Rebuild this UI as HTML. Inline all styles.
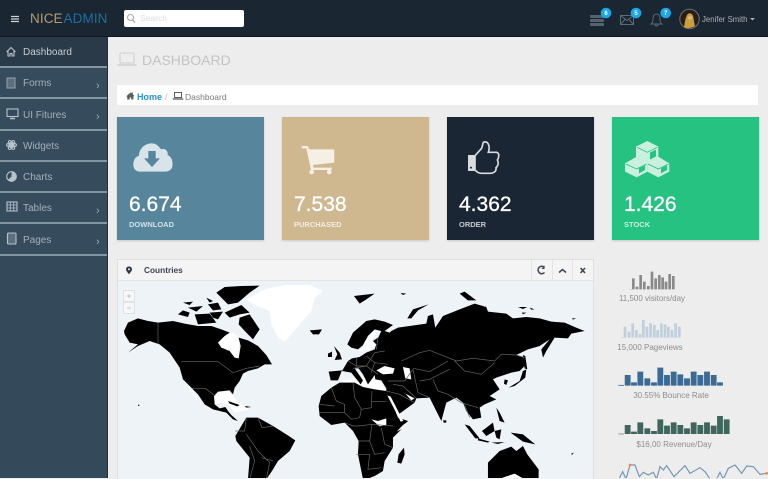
<!DOCTYPE html>
<html><head><meta charset="utf-8"><title>Nice Admin</title>
<style>
html,body{margin:0;padding:0}
body{width:768px;height:478px;overflow:hidden;background:#ededed;font-family:"Liberation Sans",sans-serif;position:relative}
.a{position:absolute;white-space:nowrap}
#top{left:0;top:0;width:768px;height:36px;background:#1a2632;border-bottom:1px solid #10171f}
#side{left:0;top:37px;width:108px;height:441px;background:#34495a}
.it{position:absolute;left:0;width:107px;height:29px;border-bottom:2px solid #8496a1;color:#a3b0b9;font-size:10px;line-height:32px;text-indent:23px;background:#364c5d}
.it b{position:absolute;left:96px;top:2px;font-weight:400;font-size:11px;text-indent:0;color:#98a7b1}
.card{position:absolute;top:117px;width:147px;height:123px;box-shadow:0 1px 2px #c8c8c8;color:#fff}
.card .n{position:absolute;left:12px;top:75px;font-size:21px;line-height:26px;-webkit-text-stroke:.3px currentColor}
.card .l{position:absolute;left:12px;top:103px;font-size:7.500px;line-height:10px;font-weight:700;opacity:.75}
.st{position:absolute;width:150px;text-align:center;font-size:8px;line-height:11px;color:#8d8d8d}
</style></head><body>

<div class="a" id="top"></div>
<div class="a" style="left:30px;top:11px;font-size:13.5px;line-height:15px;color:#b99b70;letter-spacing:.1px">NICE <span style="color:#1c6f9e;margin-left:-3px">ADMIN</span></div>
<div class="a" style="left:124px;top:10px;width:120px;height:17px;background:#fff;border-radius:2px"></div>
<div class="a" style="left:140px;top:13px;font-size:8.5px;line-height:11px;color:#d9dde0">Search</div>
<div class="a" style="left:702px;top:14px;font-size:7.8px;line-height:11px;color:#a9b0b6">Jenifer Smith</div>

<div class="a" id="side">
<div class="it" style="top:0;background:#2b3a48;color:#c5ced4">Dashboard</div>
<div class="it" style="top:31px">Forms<b>›</b></div>
<div class="it" style="top:62px;height:30px;line-height:33px">UI Fitures<b>›</b></div>
<div class="it" style="top:94px">Widgets</div>
<div class="it" style="top:125px">Charts</div>
<div class="it" style="top:156px">Tables<b>›</b></div>
<div class="it" style="top:187px;height:30px;line-height:33px">Pages<b>›</b></div>
</div>
<div class="a" style="left:107px;top:37px;width:1px;height:441px;background:#20303c"></div>

<div class="a" style="left:142px;top:51px;font-size:14px;line-height:19px;color:#c3c3c3">DASHBOARD</div>
<div class="a" style="left:117px;top:85px;width:641px;height:20px;background:#fff"></div>
<div class="a" style="left:137px;top:91px;font-size:9px;line-height:12px;color:#2a8fe0;font-weight:700">Home</div>
<div class="a" style="left:165px;top:91px;font-size:9px;line-height:12px;color:#bbb">/</div>
<div class="a" style="left:185px;top:91px;font-size:8.5px;line-height:12px;color:#777">Dashboard</div>

<div class="card" style="left:117px;background:#56859c"><div class="n">6.674</div><div class="l">DOWNLOAD</div></div>
<div class="card" style="left:282px;background:#cfb790"><div class="n">7.538</div><div class="l">PURCHASED</div></div>
<div class="card" style="left:447px;background:#1a2633"><div class="n">4.362</div><div class="l">ORDER</div></div>
<div class="card" style="left:612px;background:#26c281"><div class="n">1.426</div><div class="l">STOCK</div></div>

<div class="a" style="left:117px;top:259px;width:475px;height:219px;background:#eef3f8;border:1px solid #dfdfdf;border-bottom:0;overflow:hidden">
<div class="a" style="left:0;top:0;width:475px;height:20px;background:#f4f4f4;border-bottom:1px solid #e3e3e3"></div>
<div class="a" style="left:26px;top:5px;font-size:8.3px;line-height:11px;font-weight:700;color:#3d4650">Countries</div>
<div class="a" style="left:413px;top:0;width:20px;height:20px;border-left:1px solid #e3e3e3"></div>
<div class="a" style="left:434px;top:0;width:20px;height:20px;border-left:1px solid #e3e3e3"></div>
<div class="a" style="left:454px;top:0;width:20px;height:20px;border-left:1px solid #e3e3e3"></div>
</div>

<svg class="a" style="left:0;top:0" width="768" height="478" viewBox="0 0 768 478">
<defs><clipPath id="mc"><rect x="118" y="281" width="475" height="197"/></clipPath></defs>

<!-- top bar icons -->
<path d="M11 16.500h8M11 19h8M11 21.500h8" stroke="#cfd4d8" stroke-width="1.300" fill="none"/>
<circle cx="130.500" cy="17.500" r="3" fill="none" stroke="#aaa" stroke-width="1.100"/><path d="M132.500 20l2.500 2.500" stroke="#aaa" stroke-width="1.300"/>
<g fill="#55636f"><rect x="590" y="15" width="14" height="3" rx="1"/><rect x="590" y="19" width="14" height="3" rx="1"/><rect x="590" y="23" width="14" height="3" rx="1"/></g>
<g fill="none" stroke="#5d6a76" stroke-width="1"><rect x="620.500" y="15.500" width="13" height="9"/><path d="M620.500 15.500l6.500 5 6.500-5M620.500 24.500l4.500-5M633.500 24.500l-4.500-5"/>
<path d="M651 24c2-1.500 2-3 2-5.500 0-3 1.500-4.500 3.500-4.500s3.500 1.500 3.500 4.500c0 2.500 0 4 2 5.500zM655 24.500c0 2 3 2 3 0"/></g>
<g fill="#1ba7e8"><circle cx="606" cy="13" r="5.300"/><circle cx="636" cy="13" r="5.300"/><circle cx="665.700" cy="13" r="5.300"/></g>
<g fill="#fff" font-family="Liberation Sans" font-size="6" font-weight="700" text-anchor="middle"><text x="606" y="15">6</text><text x="636" y="15">5</text><text x="665.700" y="15">7</text></g>
<circle cx="689.500" cy="19" r="9.700" fill="#2a1d14" stroke="#66747d" stroke-width="1"/>
<path d="M684 27c1-5 1-8 3-12 2-3 5-2 6 1 1 4 1 7 2 10-3 2-8 3-11 1z" fill="#c9a03c"/><path d="M688 18c0-2.500 4-2.500 4 0 0 2-4 2-4 0z" fill="#dcb68c"/>
<path d="M750 18h5l-2.500 2.500z" fill="#a9b0b6"/>

<!-- sidebar icons -->
<g fill="none" stroke="#b7c2ca" stroke-width="1.100">
<path d="M6.500 52l4.500-4.500 4.500 4.500M8 51v5h2v-2.500h2v2.500h2v-5"/>
<rect x="7" y="78" width="8" height="10" fill="#5c6f7d" stroke="#8d9ca7"/>
<rect x="7" y="109" width="11" height="7.500" fill="#34495a"/><path d="M10 118.500h5" stroke-width="1.500"/>
<circle cx="11.500" cy="145" r="1.800" fill="#b7c2ca"/><ellipse cx="11.500" cy="145" rx="5" ry="2.200"/><ellipse cx="11.500" cy="145" rx="5" ry="2.200" transform="rotate(60 11.500 145)"/><ellipse cx="11.500" cy="145" rx="5" ry="2.200" transform="rotate(120 11.500 145)"/>
<circle cx="11.500" cy="176.500" r="4.800"/>
<rect x="7" y="202" width="10" height="9"/><path d="M7 205h10M7 208h10M10.300 202v9M13.700 202v9" stroke-width=".8"/>
<rect x="7.500" y="233" width="8.500" height="11" rx="1" fill="#5c6f7d"/>
</g>
<path d="M11.500 176.500v-4.800a4.800 4.800 0 1 1-3.500 8z" fill="#b7c2ca"/>

<!-- title + crumb icons -->
<g fill="none" stroke="#cfcfcf" stroke-width="1.100"><rect x="120" y="53" width="14" height="10" rx="1"/><path d="M117.500 65h19" stroke-width="1.500"/></g>
<path d="M126 96.500l4.500-4 1.200 1v-1h1.200v2l1.500 1.400-1 .6v3h-2.200v-2h-1.500v2h-2.500v-3z" fill="#5d5d5d"/>
<g fill="none" stroke="#5d5d5d" stroke-width="1"><rect x="174.500" y="92.500" width="7" height="5"/><path d="M172.800 99h10.500" stroke-width="1.300"/></g>

<!-- card icons -->
<g transform="translate(115 115) scale(.3333)">
<path d="M55 150C55 132 63 125 72 122 72 100 90 85 110 85 125 85 132 95 138 103 150 98 160 108 158 120 170 125 175 140 172 155 170 165 160 170 150 170H75C62 170 55 160 55 150Z" fill="#d8e4ea"/>
<path d="M100 108H122V130H135L111 156 87 130H100Z" fill="#56859c"/>
<g fill="#f5efe5"><path d="M560 93H578L583 103H658V143L594 150 596 158H650V165H588L574 100H560Z"/><circle cx="590" cy="171" r="7"/><circle cx="643" cy="171" r="7"/></g>
</g>
<g transform="translate(440 115) scale(.3333)">
<path d="M105 122L125 100 130 82C145 76 151 95 145 112H170C180 115 176 130 172 135 178 145 172 155 168 158 170 170 160 175 150 175H125C115 175 110 170 105 165Z" fill="none" stroke="#d8dcdf" stroke-width="5"/>
<rect x="84" y="120" width="21" height="48" rx="2" fill="#d8dcdf"/><circle cx="93" cy="158" r="3" fill="#1a2633"/>
<g fill="#c9f0de">
<path d="M588 95L622 78 655 95V130L622 148 588 130Z"/>
<path d="M555 145L590 125 622 145V170L590 187 555 170Z"/>
<path d="M622 145L655 125 688 145V170L655 187 622 170Z"/></g>
<g fill="#26c281"><path d="M630 113L648 104V124L630 134Z"/><path d="M597 160L615 151V165L597 175Z"/><path d="M663 160L681 151V165L663 175Z"/></g>
<g fill="none" stroke="#26c281" stroke-width="2.500"><path d="M592 97L622 112 652 97M558 147L590 162 620 147M624 147L655 162 686 147"/></g>
</g>

<!-- panel icons -->
<path d="M129 266.500c-2 0-3 1.300-3 2.800 0 1.700 2 3.700 3 5 1-1.300 3-3.300 3-5 0-1.500-1-2.800-3-2.800z" fill="#2d3a44"/><circle cx="129" cy="269.200" r="1" fill="#f4f4f4"/>
<g fill="none" stroke="#3d4650" stroke-width="1.500"><path d="M544.500 267.500a3.700 3.700 0 1 0 0 5"/><path d="M559 272.500l3.500-3 3.500 3"/><path d="M580.500 268l4.500 5M585 268l-4.500 5"/></g>
<path d="M544.500 265.500v3.500h-3z" fill="#3d4650"/>

<!-- MAP -->
<g clip-path="url(#mc)"><g transform="translate(118 281) scale(.3333)">
<!-- Greenland + seas behind land -->
<g fill="#fff">
<path d="M385 55L440 25 500 12 575 12 615 30 590 50 580 90 550 125 500 182 480 170 460 130 455 90 410 72Z"/>
<path d="M300 185L320 165 345 155 362 170 365 232 350 232 335 210 310 200Z"/>
<path d="M285 340L330 328 345 345 360 365 395 385 350 395 335 375 315 365 290 370Z"/>
<path d="M665 300L770 285 805 322 805 332 770 325 735 318 710 305Z"/>
</g>
<g fill="#000">
<!-- North America -->
<path d="M18 150L30 125 60 112 90 120 120 125 165 120 200 128 240 135 280 135 310 145 335 155 320 165 300 185 310 200 335 210 350 230 362 232 368 195 362 170 390 178 420 195 445 222 462 250 440 250 420 262 390 270 375 278 365 300 350 320 345 340 335 328 300 332 288 345 290 370 305 382 322 378 330 390 340 402 360 420 345 415 325 395 285 385 260 370 240 340 222 322 195 295 185 260 155 215 125 190 95 180 60 195 30 215 60 190 35 185 20 160Z"/>
<path d="M295 35L320 18 370 15 425 14 395 35 360 65 330 70 310 50Z"/>
<path d="M365 110L395 100 425 145 405 175 385 155 362 130Z"/>
<path d="M180 100L195 88 215 95 210 108ZM195 65L225 62 215 72ZM210 80L255 75 235 92ZM230 100L275 98 295 125 240 130ZM265 50L285 60 275 65ZM270 70L300 65 310 85 285 88ZM275 95L315 92 300 115 285 110ZM320 95L370 72 395 95 365 100 335 110Z"/>
<path d="M330 360L365 372 358 376 335 368ZM380 375L400 378 385 380Z"/><circle cx="62" cy="373" r="2"/>
<!-- South America -->
<path d="M352 465L385 410 420 410 465 435 505 460 532 478 515 510 480 540 462 570 445 595H390L395 530 355 480Z"/>
<!-- N Atlantic islands -->
<path d="M575 148L612 145 603 160 585 160Z"/>
<path d="M708 45L770 38 745 55 725 68ZM848 36L865 38 855 42ZM868 112L885 85 932 70 900 88 880 112ZM1025 38L1040 32 1075 58 1050 58ZM1200 78L1228 78 1215 84ZM1235 80L1250 85 1240 86ZM1212 95L1225 95 1215 100ZM1362 112L1375 112 1365 116Z"/>
<path d="M648 195L665 215 672 235 650 237 658 220ZM630 218L642 212 642 228 630 228Z"/>
<path d="M632 272L672 268 660 298 638 298Z"/>
<!-- Scandinavia -->
<path d="M688 190L705 155 745 120 770 115 800 122 825 132 800 150 815 155 805 170 780 172 790 150 770 145 750 165 738 190 720 205 700 200Z"/>
<!-- Eurasia -->
<path d="M672 270L690 240 702 232 725 228 745 215 770 205 775 190 765 180 780 170 805 165 820 150 840 140 925 128 930 105 945 100 952 140 975 105 1025 85 1070 68 1105 78 1110 92 1165 98 1185 112 1225 108 1265 112 1300 122 1340 125 1380 142 1400 150 1360 158 1350 172 1310 170 1285 210 1275 230 1270 205 1295 175 1265 195 1230 205 1195 222 1215 228 1225 250 1205 270 1180 275 1135 290 1125 295 1145 325 1115 345 1135 355 1100 370 1085 380 1090 410 1065 415 1045 390 1035 365 1015 350 985 365 970 420 945 370 935 350 895 352 890 365 845 398 825 392 805 345 805 322 790 298 772 295 770 282 765 290 750 310 735 280 722 262 710 262 735 298 728 310 700 275Z"/>
<!-- Africa -->
<path d="M602 375L610 345 640 320 665 305 710 305 735 318 770 325 805 330 820 360 840 410 870 420 850 445 825 470 825 500 800 540 795 570 770 585 745 595H735L720 520 722 480 705 450 680 425 640 432 605 405Z"/>
<path d="M838 545L842 520 858 500 860 520 850 548Z"/>
<path d="M975 418L985 418 985 425 977 425Z"/>
<!-- Japan etc -->
<path d="M1172 320L1205 300 1215 270 1225 265 1222 290 1190 315ZM1215 222L1222 225 1228 265 1220 262ZM1160 295L1170 298 1165 312 1158 308Z"/>
<!-- Indonesia -->
<path d="M1092 450L1125 425 1130 450 1105 465ZM1040 430L1055 435 1085 472 1072 472ZM1080 472L1115 482 1110 485 1080 478ZM1130 450L1150 445 1145 475 1135 470ZM1178 455L1215 460 1252 490 1215 482ZM1135 380L1145 395 1160 425 1145 420ZM1120 485L1160 483 1140 489ZM1360 518L1368 515 1362 522Z"/>
<!-- Australia -->
<path d="M1110 545L1145 510 1180 497 1195 510 1215 495 1228 520 1262 565 1262 595H1110Z"/>
</g>
<!-- seas over land -->
<g fill="#fff">
<path d="M775 268L800 255 830 262 825 278 795 280Z"/>
<path d="M855 258L875 262 880 295 862 292Z"/>
<path d="M862 338L890 352 880 358Z"/>
<path d="M735 192L750 165 770 148 778 152 760 175 772 192 750 208 722 214Z"/>
<path d="M760 415L780 420 805 412 805 432 785 436Z"/>
<path d="M215 315L240 358 236 358 213 318Z"/>
<path d="M1140 595L1190 578 1220 595Z"/>
<path d="M808 343L818 347 856 420 848 422Z"/>
<path d="M872 420L860 440 836 452 855 432Z"/>
</g>
<!-- borders -->
<g fill="none" stroke="#666" stroke-width="2">
<path d="M120 125V188M190 242H300L345 275 385 262 425 255M222 322H262L292 345"/>
<path d="M385 410L380 450 352 450M420 410L432 440 465 435M385 460L420 510 455 545 445 595M395 495L410 540 395 595M465 540L430 530"/>
<path d="M640 320L655 360 680 370 680 395 605 395M705 305L710 350 730 385 760 380 762 330M805 362H762M730 385L725 410 700 415 680 395M680 425L705 435 720 435 762 430 825 435M720 480H755L762 430M755 480L770 520 800 515M715 520H755L750 565 790 560M790 440L800 490 825 500M605 370L650 375"/>
<path d="M690 240L715 255H745L770 215 800 210M715 255V230M745 255L780 280M745 225L770 245 810 250M705 262L745 255M770 245L760 275M780 172L775 205"/>
<path d="M850 240L905 215 935 208 985 228 1015 240 1065 232 1130 240 1150 220 1195 222 1220 230M1010 240L1040 270 1090 280 1130 245M885 262L935 272 990 240M905 300L935 295 995 265M885 265L900 335 935 350M945 295L960 330 990 340 1030 365 1080 380M825 310L855 315 895 352M805 330L845 340 890 365M1040 370L1055 410M810 300L860 300 885 265"/>
</g>
</g>
<!-- zoom control -->
<rect x="123.500" y="290.500" width="11" height="11" fill="#f7f7f7" stroke="#e1e1e1"/>
<rect x="123.500" y="302.500" width="11" height="11" fill="#f7f7f7" stroke="#e1e1e1"/>
<path d="M127 296h4M129 294v4M127 308h4" stroke="#c4c4c4" fill="none"/>
</g>

<!-- sparklines -->
<g transform="translate(600 260) scale(.3333)" fill="none" stroke-width="8">
<path stroke="#8a8a8a" d="M100 88V55M111 88V80M122 88V45M133 88V65M145 88V78M156 88V35M167 88V55M178 88V45M188 88V52M198 88V65M209 88V42M220 88V48"/>
<path stroke="#bbb" stroke-width="1.500" d="M88 88H96"/>
<path stroke="#bfcfdd" d="M75 233V200M87 233V215M98 233V190M109 233V210M120 233V222M130 233V180M141 233V200M152 233V190M163 233V195M173 233V210M184 233V190M195 233V193M205 233V200M216 233V210M227 233V190M238 233V200"/>
<path stroke="#ccc" stroke-width="1.500" d="M62 233H72"/>
</g>
<g transform="translate(600 365) scale(.3333)" fill="none" stroke-width="17.500">
<path stroke="#3b6a94" d="M83 62V30M102 62V52M121 62V20M142 62V40M162 62V52M181 62V8M201 62V30M221 62V20M241 62V28M261 62V40M281 62V20M301 62V30M321 62V20M341 62V30M360 62V52"/>
<path stroke="#3b6a94" stroke-width="2.500" d="M55 61H72"/>
<path stroke="#3f665c" d="M83 207V180M102 207V200M121 207V172M142 207V190M162 207V198M181 207V163M201 207V182M221 207V172M241 207V180M261 207V190M281 207V172M301 207V180M321 207V172M341 207V182M360 207V153M380 207V163"/>
<path stroke="#8a8a8a" stroke-width="2.500" d="M55 207H72"/>
<path stroke="#7396b6" stroke-width="3.500" d="M57 342L68 320 78 342 90 300 105 300 118 335 130 322 145 330 160 322 170 342 180 305 190 315 200 302 222 335 255 302 270 325 300 308 315 320 330 342 350 342 360 322 370 342 385 310 405 300 425 325 440 303 460 305 480 328 500 325 504 325"/>
<circle cx="90" cy="300" r="4" fill="#f08a3c"/><circle cx="500" cy="325" r="4" fill="#f08a3c"/>
</g>
</svg>

<div class="st" style="left:577px;top:293px">11,500 visitors/day</div>
<div class="st" style="left:575px;top:342px">15,000 Pageviews</div>
<div class="st" style="left:596px;top:390px">30.55% Bounce Rate</div>
<div class="st" style="left:599px;top:439px">$16,00 Revenue/Day</div>
</body></html>
